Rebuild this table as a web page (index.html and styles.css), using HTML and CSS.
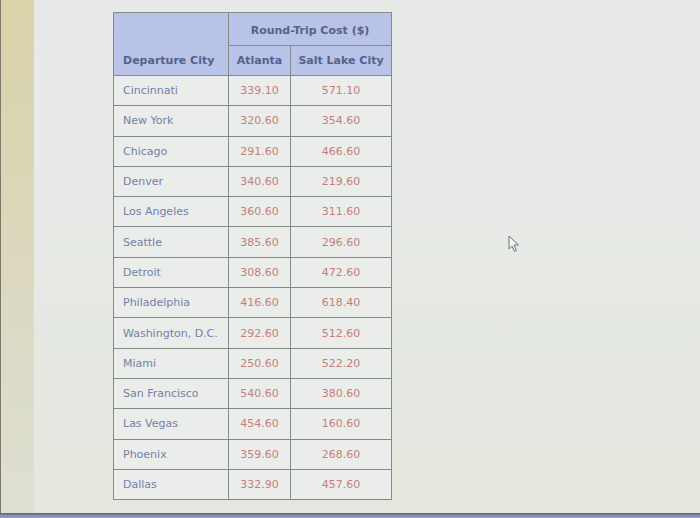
FILE: index.html
```html
<!DOCTYPE html>
<html>
<head>
<meta charset="utf-8">
<link rel="stylesheet" href="styles.css">
</head>
<body>
<div class="screen">
  <div class="strip"></div>
  <div class="main">
    <table class="cost">
      <thead>
        <tr class="h1">
          <th class="dep" rowspan="2">Departure City</th>
          <th class="span" colspan="2">Round-Trip Cost ($)</th>
        </tr>
        <tr class="h2">
          <th class="atl">Atlanta</th>
          <th class="slc">Salt Lake City</th>
        </tr>
      </thead>
      <tbody>
        <tr><td class="city">Cincinnati</td><td class="num">339.10</td><td class="num">571.10</td></tr>
        <tr><td class="city">New York</td><td class="num">320.60</td><td class="num">354.60</td></tr>
        <tr><td class="city">Chicago</td><td class="num">291.60</td><td class="num">466.60</td></tr>
        <tr><td class="city">Denver</td><td class="num">340.60</td><td class="num">219.60</td></tr>
        <tr><td class="city">Los Angeles</td><td class="num">360.60</td><td class="num">311.60</td></tr>
        <tr><td class="city">Seattle</td><td class="num">385.60</td><td class="num">296.60</td></tr>
        <tr><td class="city">Detroit</td><td class="num">308.60</td><td class="num">472.60</td></tr>
        <tr><td class="city">Philadelphia</td><td class="num">416.60</td><td class="num">618.40</td></tr>
        <tr><td class="city">Washington, D.C.</td><td class="num">292.60</td><td class="num">512.60</td></tr>
        <tr><td class="city">Miami</td><td class="num">250.60</td><td class="num">522.20</td></tr>
        <tr><td class="city">San Francisco</td><td class="num">540.60</td><td class="num">380.60</td></tr>
        <tr><td class="city">Las Vegas</td><td class="num">454.60</td><td class="num">160.60</td></tr>
        <tr><td class="city">Phoenix</td><td class="num">359.60</td><td class="num">268.60</td></tr>
        <tr><td class="city">Dallas</td><td class="num">332.90</td><td class="num">457.60</td></tr>
      </tbody>
    </table>
    <svg class="cursor" width="12" height="18" viewBox="0 0 12 18">
      <path d="M1 1 L1 14 L4 11 L6.5 16.5 L8.5 15.5 L6 10 L10.5 10 Z" fill="#f2f3f2" stroke="#6f7479" stroke-width="1"/>
    </svg>
  </div>
</div>
<div class="bezel"></div>
</body>
</html>
```

FILE: styles.css
```css
html, body {
  margin: 0;
  padding: 0;
  width: 700px;
  height: 518px;
  overflow: hidden;
  background: #e5e8e3;
  font-family: "DejaVu Sans", Verdana, sans-serif;
}

.screen {
  display: flex;
  height: 513px;
}

.strip {
  width: 33px;
  flex: none;
  border-left: 1px solid #7d7a6a;
  background: linear-gradient(180deg, #d9d3aa 0%, #dad6b6 35%, #dcdbc8 70%, #dedfd4 100%);
  box-shadow: 1px 0 2px rgba(120, 120, 100, 0.25);
}

.main {
  position: relative;
  flex: 1;
  padding: 12px 0 0 79px;
  background: linear-gradient(180deg, #e8eae9 0%, #e6e9e5 45%, #e3e7dd 100%);
}

.cost {
  border-collapse: collapse;
  font-size: 11px;
  background: #eaedea;
}

.cost th,
.cost td {
  border: 1px solid #858b86;
  padding: 0;
}

.cost th {
  background: #b8c3e7;
  color: #56618c;
  font-weight: bold;
}

.h1 th {
  height: 30px;
}

.h2 th {
  height: 29px;
}

.dep {
  width: 115px;
  text-align: left;
  vertical-align: bottom;
  padding: 0 0 8px 9px !important;
  box-sizing: border-box;
}

.span {
  text-align: center;
  padding-top: 2px !important;
}

.atl {
  width: 61px;
}

.slc {
  width: 100px;
}

.cost td {
  height: 29.3px;
}

.city {
  color: #7580a8;
  padding-left: 9px !important;
}

.num {
  color: #c77d7d;
  text-align: center;
}

.cursor {
  position: absolute;
  left: 474px;
  top: 235px;
}

.bezel {
  height: 5px;
  background: linear-gradient(180deg, #5a5c66 0%, #7e88b0 40%, #9aa3c8 100%);
}
```
